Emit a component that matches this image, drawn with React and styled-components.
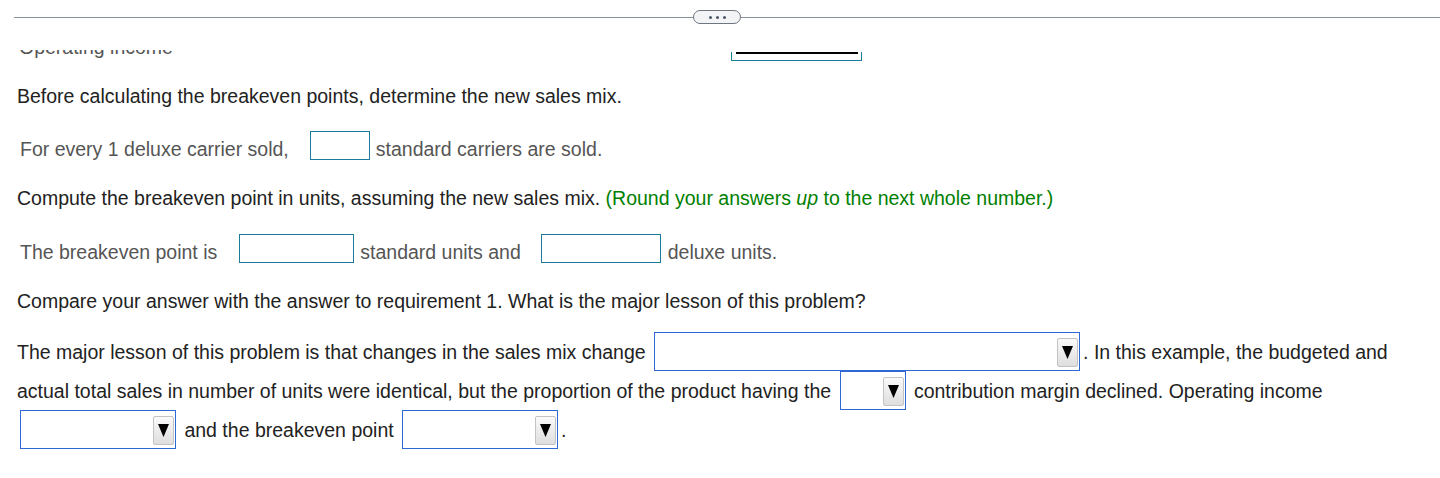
import React from "react";
import styled, { createGlobalStyle } from "styled-components";

const GlobalStyle = createGlobalStyle`
  body {
    margin: 0;
    background: #fff;
    font-family: "Liberation Sans", Arial, sans-serif;
    color: #222;
  }
`;

const Page = styled.div`
  width: 1440px;
  font-size: 19.5px;
`;

const Divider = styled.div`
  display: flex;
  align-items: center;
  height: 34px;
  padding-left: 14px;
`;

const Rule = styled.div`
  height: 1px;
  background: #8c929b;
  flex: ${({ $grow }) => ($grow ? 1 : "none")};
  width: ${({ $w }) => ($w ? `${$w}px` : "auto")};
`;

const Pill = styled.div`
  width: 48px;
  height: 14px;
  box-sizing: border-box;
  border: 1px solid #6e7681;
  border-radius: 8px;
  background: #f3f4f6;
  display: flex;
  align-items: center;
  justify-content: center;
  gap: 4px;
`;

const Dot = styled.span`
  width: 3px;
  height: 3px;
  border-radius: 50%;
  background: #4b5563;
`;

const ClipRow = styled.div`
  margin-top: 16px;
  height: 12px;
  overflow: hidden;
  display: grid;
  grid-template-columns: 712px 131px;
  padding-left: 19px;
`;

const ClipLabel = styled.div`
  margin-top: -14px;
  line-height: 22px;
  color: #555;
`;

const TotalBox = styled.div`
  margin-top: 2px;
  height: 9px;
  box-sizing: border-box;
  border: 1px solid #1c7c99;
  border-top: none;
  padding: 0 3px 0 4px;
`;

const TotalBar = styled.div`
  height: 2px;
  background: #000;
`;

const Para = styled.p`
  margin: ${({ $top }) => $top}px 0 0;
  padding-left: 17px;
  line-height: 22px;
`;

const Hint = styled.span`
  color: #008000;
`;

const AnswerRow = styled.div`
  margin-top: ${({ $top }) => $top}px;
  padding-left: 20px;
  display: flex;
  align-items: flex-end;
  color: #555;
`;

const Label = styled.span`
  line-height: 22px;
`;

const NumberInput = styled.input`
  width: ${({ $w }) => $w}px;
  height: 29px;
  box-sizing: border-box;
  border: 1px solid #1c7c99;
  padding: 0;
  margin: 0 ${({ $right }) => $right}px 0 ${({ $left }) => $left}px;
  font: inherit;
  background: #fff;
`;

const Lesson = styled.p`
  margin: 20px 0 0;
  padding: 0 17px;
  line-height: 24px;
`;

const Select = styled.span`
  display: inline-block;
  overflow: hidden;
  vertical-align: -12px;
  width: ${({ $w }) => $w}px;
  height: 39px;
  box-sizing: border-box;
  border: 1px solid #2d68d4;
  margin: 0 3px;
  background: #fff;
`;

const SelectInner = styled.span`
  display: flex;
  height: 100%;
  justify-content: flex-end;
  align-items: flex-end;
  padding: 0 1px 3px 0;
  box-sizing: border-box;
`;

const DropButton = styled.span`
  width: 21px;
  height: 29px;
  box-sizing: border-box;
  border: 1px solid #c3c3c3;
  border-radius: 2px;
  background: linear-gradient(#fafafa, #dedede);
  display: flex;
  align-items: center;
  justify-content: center;
`;

function Dropdown({ width }) {
  return (
    <Select $w={width}>
      <SelectInner>
        <DropButton>
          <svg width="11" height="13" viewBox="0 0 11 13">
            <polygon points="0,0 11,0 5.5,13" fill="#000" />
          </svg>
        </DropButton>
      </SelectInner>
    </Select>
  );
}

export default function App() {
  return (
    <Page>
      <GlobalStyle />
      <Divider>
        <Rule $w={679} />
        <Pill>
          <Dot />
          <Dot />
          <Dot />
        </Pill>
        <Rule $grow />
      </Divider>

      <ClipRow>
        <ClipLabel>Operating income</ClipLabel>
        <TotalBox>
          <TotalBar />
        </TotalBox>
      </ClipRow>

      <Para $top={23}>Before calculating the breakeven points, determine the new sales mix.</Para>

      <AnswerRow $top={24}>
        <Label>For every 1 deluxe carrier sold,</Label>
        <NumberInput $w={60} $left={21} $right={6} />
        <Label>standard carriers are sold.</Label>
      </AnswerRow>

      <Para $top={27}>
        Compute the breakeven point in units, assuming the new sales mix.{" "}
        <Hint>
          (Round your answers <em>up</em> to the next whole number.)
        </Hint>
      </Para>

      <AnswerRow $top={25}>
        <Label>The breakeven point is</Label>
        <NumberInput $w={115} $left={22} $right={6} />
        <Label>standard units and</Label>
        <NumberInput $w={120} $left={20} $right={7} />
        <Label>deluxe units.</Label>
      </AnswerRow>

      <Para $top={27}>
        Compare your answer with the answer to requirement 1. What is the major lesson of this problem?
      </Para>

      <Lesson>
        The major lesson of this problem is that changes in the sales mix change{" "}
        <Dropdown width={426} />. In this example, the budgeted and actual total sales in number of units were
        identical, but the proportion of the product having the <Dropdown width={66} /> contribution margin
        declined. Operating income <Dropdown width={156} /> and the breakeven point <Dropdown width={156} />.
      </Lesson>
    </Page>
  );
}
